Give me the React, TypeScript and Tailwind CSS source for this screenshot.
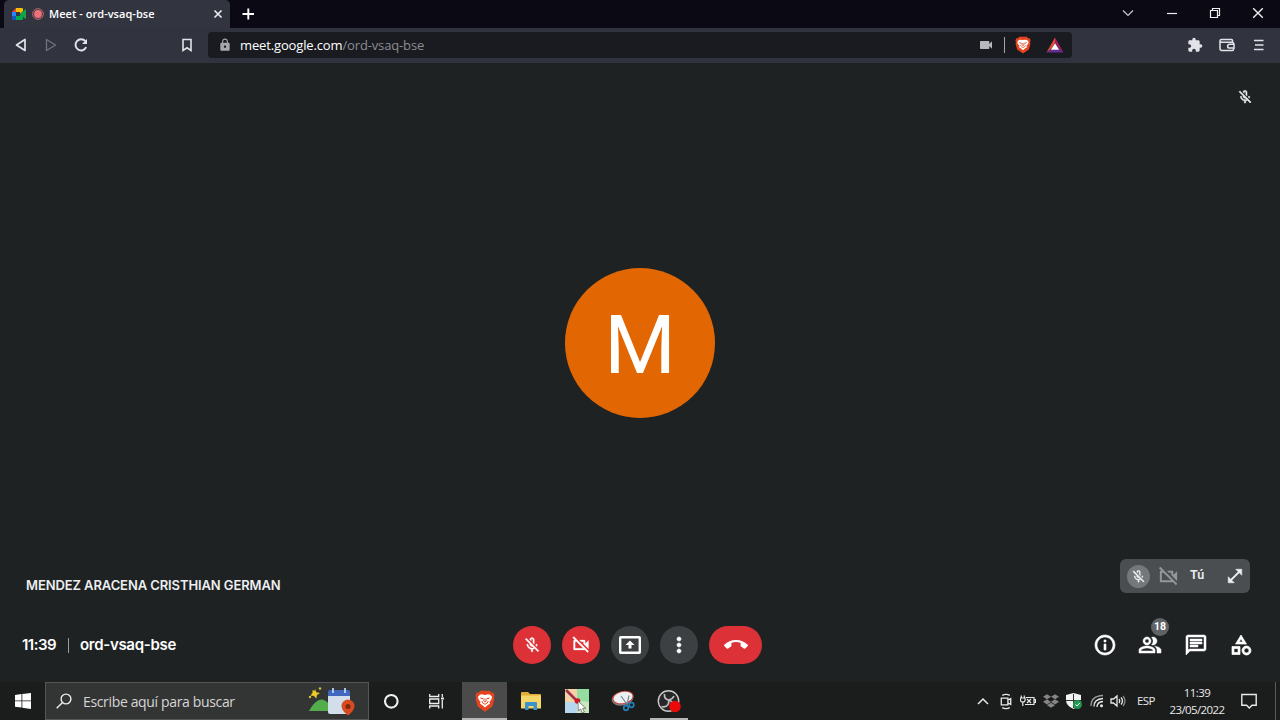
import React from "react";
import {
  MdOutlineMicOff,
  MdOutlineVideocamOff,
  MdMoreVert,
  MdCallEnd,
  MdOutlineInfo,
  MdOutlinePeopleAlt,
  MdOutlineChat,
  MdOutlineCategory,
  MdVideocam,
  MdLock,
  MdExtension,
  MdOpenInFull,
} from "react-icons/md";
import { FaDropbox } from "react-icons/fa";

function BraveIcon({ className }: { className: string }) {
  return (
    <svg viewBox="0 0 20 22" className={className}>
      <path d="M5.500.7h9l2 2 1.800-.2 1.200 3-.7 2 .5 2-2 7L10 21.700 2.700 16.500l-2-7 .5-2-.7-2 1.200-3 1.800.2z" fill="#e8431f" />
      <path d="M4.800 4.800 7 4.300l3 .6 3-.6 2.200.5 1.900 2.300-.8 2.500-1.800 2.400.4 1.700-2.400 1.600L10 17.500l-2.500-2.200-2.400-1.600.4-1.700-1.800-2.400L2.900 7.100z" fill="#fff" />
      <path d="m4.800 7.600 3.400.7.300 1-2.200-.3zM15.200 7.600l-3.400.7-.3 1 2.200-.3z" fill="#e8431f" />
      <path d="m9.200 8.500-.4 2.600L10 12l1.200-.9-.4-2.600M6.800 11l1.100 2.200L10 14.300l2.100-1.100 1.100-2.200" fill="none" stroke="#e8431f" strokeWidth=".9" />
    </svg>
  );
}

function TabStrip() {
  return (
    <div className="flex h-7 shrink-0 bg-[#0b0a14] pl-1 text-white">
      <div className="flex w-[226px] items-center rounded-t-[5px] bg-[#32353f] pl-2 pr-[7px]">
        <svg viewBox="0 0 14 12" className="h-3 w-3.5">
          <path d="M0 4 4 0v4z" fill="#ea4335" />
          <path d="M4 0h6q1 0 1 1v2L8 6V4H4z" fill="#fbbc04" />
          <path d="M0 4h4v4H0z" fill="#2684fc" />
          <path d="M0 8h4v4H1q-1 0-1-1z" fill="#1256c4" />
          <path d="M4 8h4V6l3 2.500V11q0 1-1 1H4z" fill="#00ac47" />
          <path d="m8 6 5-4.500q1-.6 1 .5v8q0 1-1 .4z" fill="#16a349" />
        </svg>
        <svg viewBox="0 0 12 12" className="ml-1.5 size-3">
          <circle cx="6" cy="6" r="5.300" fill="none" stroke="#c4686e" strokeWidth="1" />
          <circle cx="6" cy="6" r="3.900" fill="#ee7379" />
        </svg>
        <span className="-mt-0.5 ml-[5px] whitespace-nowrap text-[11px] font-semibold leading-none tracking-[0.04px]">Meet - ord-vsaq-bse</span>
        <svg viewBox="0 0 10 10" className="ml-auto size-2.5" fill="none" stroke="#e8e8ec" strokeWidth="1.700">
          <path d="m1.500 1.500 7 7m0-7-7 7" />
        </svg>
      </div>
      <svg viewBox="0 0 12 12" className="ml-3 mt-2 size-3" fill="none" stroke="#fff" strokeWidth="1.900">
        <path d="M6.300.5v11M.5 6h11.500" />
      </svg>
      <div className="ml-auto mr-4 mt-[7px] flex h-3 items-center text-[#eeeef2]">
        <svg viewBox="0 0 12 12" className="size-3" fill="none" stroke="#c9c9d0" strokeWidth="1.200">
          <path d="m1 3.500 5 5 5-5" />
        </svg>
        <svg viewBox="0 0 12 12" className="ml-8 size-3" fill="none" stroke="currentColor" strokeWidth="1.200">
          <path d="M1 6.500h10" />
        </svg>
        <svg viewBox="0 0 12 12" className="ml-[31px] size-3" fill="none" stroke="currentColor" strokeWidth="1.200">
          <path d="M1.500 3.500h7v7h-7zM3.500 3.500v-2h7v7h-2" />
        </svg>
        <svg viewBox="0 0 12 12" className="ml-[31px] size-3" fill="none" stroke="currentColor" strokeWidth="1.400">
          <path d="m1.200 1.200 9.600 9.600m0-9.600-9.600 9.600" />
        </svg>
      </div>
    </div>
  );
}

function Toolbar() {
  return (
    <div className="flex h-[35px] shrink-0 items-center bg-[#31343f] pb-px pl-3.5 pr-[14px] text-[#e2e3e8]">
      <svg viewBox="0 0 14 16" className="h-4 w-3.5" fill="none" stroke="currentColor" strokeWidth="1.700" strokeLinejoin="round">
        <path d="M2.500 8 11 2.500v11z" />
      </svg>
      <svg viewBox="0 0 14 16" className="ml-4 h-4 w-3.5" fill="none" stroke="#70737d" strokeWidth="1.300" strokeLinejoin="round">
        <path d="M11.500 8 2.500 2.500v11z" />
      </svg>
      <svg viewBox="0 0 16 16" className="ml-[15px] size-4" fill="none" stroke="currentColor" strokeWidth="1.900">
        <path d="M13.200 10.200A5.600 5.600 0 1 1 12.400 4.200" />
        <path d="M14 2v5H9z" fill="currentColor" stroke="none" />
      </svg>
      <svg viewBox="0 0 12 14" className="ml-[92px] h-3.5 w-3" fill="none" stroke="currentColor" strokeWidth="1.600">
        <path d="M2 1.500h8v11L6 9.800l-4 2.700z" />
      </svg>
      <div className="ml-[15px] flex h-[26px] w-[864px] items-center rounded-[4px] bg-[#191b20] pl-[10px] pr-[8px]">
        <MdLock className="size-3.5 text-[#a7a8ac]" />
        <span className="ml-[8px] whitespace-nowrap text-[13px] leading-none tracking-[-0.14px] text-[#8b8d92]">
          <span className="text-white">meet.google.com</span>/ord-vsaq-bse
        </span>
        <MdVideocam className="ml-auto h-4 w-4 text-[#b8b9bd]" />
        <div className="ml-[10px] h-4 w-px bg-[#a4a5a9]" />
        <BraveIcon className="ml-2.5 h-[18px] w-4" />
        <svg viewBox="0 0 18 16" className="ml-[15px] h-4 w-[18px]">
          <path d="M9 .5 9 6 4.500 12.500.5 15.500z" fill="#e64a35" />
          <path d="m9 .5 8.500 15-4-3L9 6z" fill="#9e1f63" />
          <path d="M.5 15.500h17l-4-3h-9z" fill="#662d91" />
          <path d="m9 6.200 4.200 6.500H4.800z" fill="#fff" />
        </svg>
      </div>
      <MdExtension className="ml-auto size-4" />
      <svg viewBox="0 0 16 14" className="ml-4 h-3.5 w-4" fill="none" stroke="currentColor" strokeWidth="1.500">
        <path d="M13.500 4V2.500q0-1-1-1h-10q-1.500 0-1.500 1.500v7.500q0 2 2 2h10.500q1 0 1-1V10M1 3.500q.5.8 1.500.8h11q1 0 1 1V6" />
        <path d="M15 6.300h-4.500a1.900 1.900 0 0 0 0 3.800H15z" />
      </svg>
      <svg viewBox="0 0 10 12" className="ml-[19px] mr-0.5 h-3 w-2.5" fill="none" stroke="currentColor" strokeWidth="1.600">
        <path d="M0 1.500h9.500M1 6h8.500M0 10.500h9.500" />
      </svg>
    </div>
  );
}

function CallStage() {
  return (
    <div className="flex h-[542px] shrink-0 flex-col">
      <div className="flex h-[205px] justify-end pr-[27px] pt-[26px]">
        <MdOutlineMicOff className="size-4 stroke-current stroke-[0.8] text-[#e8eaed] [&_path[fill=none]]:stroke-none" />
      </div>
      <div className="mx-auto flex size-[150px] shrink-0 items-center justify-center rounded-full bg-[#e26703]">
        <span className="mt-[3px] font-['Roboto',sans-serif] text-[82px] leading-none text-white">M</span>
      </div>
      <div className="mt-[141px] flex items-start justify-between pl-[26px] pr-[30px]">
        <span className="mt-[19px] whitespace-nowrap font-['Inter',sans-serif] text-[13px] font-semibold leading-[14px] tracking-[-0.1px] text-[#eceef0]">MENDEZ ARACENA CRISTHIAN GERMAN</span>
        <div className="flex h-[34px] w-[130px] items-center rounded-md bg-[#4a4e51] pl-[7px] pr-[6px] text-[#eceef0]">
          <div className="flex size-[23px] items-center justify-center rounded-full bg-[#75787a]">
            <MdOutlineMicOff className="size-[15px] stroke-current stroke-[0.6] [&_path[fill=none]]:stroke-none" />
          </div>
          <MdOutlineVideocamOff className="ml-[7px] size-[23px] text-[#95989a]" />
          <span className="mb-0.5 ml-[10px] font-['Roboto',sans-serif] text-[12.500px] font-semibold leading-none">Tú</span>
          <MdOpenInFull className="ml-auto size-[18px] stroke-current stroke-[0.8] [&_path[fill=none]]:stroke-none" />
        </div>
      </div>
    </div>
  );
}

function CallControls() {
  return (
    <div className="flex h-[77px] shrink-0 items-start pl-[22px] pr-[27px] text-white">
      <div className="mt-[32px] flex w-[491px] items-center font-['Inter',sans-serif] text-[15px] font-semibold leading-4">
        <span className="w-[35px] tracking-[-0.5px]">11:39</span>
        <div className="ml-[11px] h-[15px] w-px bg-[#9b9ea0]" />
        <span className="ml-[11px] whitespace-nowrap tracking-[-0.3px]">ord-vsaq-bse</span>
      </div>
      <div className="mt-[21px] flex h-[38px] gap-[11px]">
        <div className="flex size-[38px] items-center justify-center rounded-full bg-[#dc3237]"><MdOutlineMicOff className="size-[18px] stroke-current stroke-[0.5] [&_path[fill=none]]:stroke-none" /></div>
        <div className="flex size-[38px] items-center justify-center rounded-full bg-[#dc3237]"><MdOutlineVideocamOff className="size-[20px] stroke-current stroke-[0.3] [&_path[fill=none]]:stroke-none" /></div>
        <div className="flex size-[38px] items-center justify-center rounded-full bg-[#3c4043]">
          <svg viewBox="0 0 22 18" className="h-[18px] w-[22px]">
            <rect x="1.200" y="1.200" width="19.600" height="15.600" rx=".5" fill="none" stroke="currentColor" strokeWidth="2.400" />
            <path d="m11 4.500 4.500 4.500h-3v3.500h-3V9h-3z" fill="currentColor" />
          </svg>
        </div>
        <div className="flex size-[38px] items-center justify-center rounded-full bg-[#3c4043]"><MdMoreVert className="size-[24px] stroke-current stroke-[0.6] [&_path[fill=none]]:stroke-none" /></div>
        <div className="flex h-[38px] w-[53px] items-center justify-center rounded-full bg-[#dc3237]"><MdCallEnd className="size-[24px]" /></div>
      </div>
      <div className="ml-auto mt-[28px] flex gap-[21.500px]">
        <MdOutlineInfo className="size-6 stroke-current stroke-[0.6] [&_path[fill=none]]:stroke-none" />
        <div className="relative">
          <MdOutlinePeopleAlt className="size-6 stroke-current stroke-[0.5] [&_path[fill=none]]:stroke-none" />
          <span className="absolute -top-[15px] left-[13px] flex size-[18px] items-center justify-center rounded-full bg-[#5f6366] font-['Roboto',sans-serif] text-[10.500px] font-bold leading-none">18</span>
        </div>
        <MdOutlineChat className="size-6 stroke-current stroke-[0.5] [&_path[fill=none]]:stroke-none" />
        <MdOutlineCategory className="size-6 stroke-current stroke-[0.7] [&_path[fill=none]]:stroke-none" />
      </div>
    </div>
  );
}

function Taskbar() {
  return (
    <div className="flex h-[38px] shrink-0 items-center bg-[#1b1c1c] text-[#e8e8e8]">
      <svg viewBox="0 0 16 16" className="ml-[15px] size-4" fill="#fff">
        <path d="m0 2 6.500-.9v6.300H0zM7.300 1 16 0v7.400H7.300zM0 8.200h6.500v6.400L0 13.800zM7.300 8.200H16V16l-8.700-1.200z" />
      </svg>
      <div className="ml-[14px] flex h-[38px] w-[324px] items-center border border-[#565656] bg-[#333434] pl-2.5 pr-[12px]">
        <svg viewBox="0 0 16 16" className="size-4" fill="none" stroke="#eee" strokeWidth="1.400">
          <circle cx="10" cy="6" r="4.900" /><path d="M6.500 9.500.7 15.300" />
        </svg>
        <span className="ml-[11px] mt-px whitespace-nowrap text-[14px] leading-none tracking-[-0.35px] text-[#d6d6d6]">Escribe aquí para buscar</span>
        <svg viewBox="0 0 48 30" className="ml-auto h-[30px] w-12">
          <path d="M1 25q4-8 10-11 5-2 10 4v7z" fill="#54ad4b" />
          <path d="m7 3 1.300 3.200L12 7l-3 2-.7 3.500L6 10 2.500 9.500l2-2.700L4.500 4l2 1z" fill="#e9ca28" />
          <circle cx="12" cy="2.500" r="1.200" fill="#dec12b" /><circle cx="2" cy="11" r="1.200" fill="#dec12b" />
          <path d="M20 8h22v18q0 2-2 2H22q-2 0-2-2z" fill="#d3deeb" />
          <path d="M20 10V6q0-2 2-2h18q2 0 2 2v4z" fill="#4267bf" />
          <path d="M25 2v5M37 2v5" stroke="#b9d3f2" strokeWidth="1.800" />
          <path d="M40 29.500q-6.500-5-6.500-9.500a6.500 6.500 0 0 1 13 0q0 4.500-6.500 9.500z" fill="#d94a20" />
          <circle cx="40" cy="20.500" r="2.500" fill="#7d2710" />
        </svg>
      </div>
      <svg viewBox="0 0 16 16" className="ml-[14px] size-4" fill="none" stroke="#f0f0f0" strokeWidth="2.100">
        <circle cx="8.300" cy="8.300" r="6.300" />
      </svg>
      <svg viewBox="0 0 16 16" className="ml-[30px] size-4" fill="none" stroke="#eee" strokeWidth="1.300">
        <path d="M.7 1v2.500h9V1M.7 6h9v4.500h-9zM.7 15.500V13h9v2.500M13.300 1v3m0 3v8.500" /><path d="M12 4.500h3v2h-3z" fill="#eee" stroke="none" />
      </svg>
      <div className="ml-[17px] flex h-[38px] w-[45px] items-center justify-center border-b-2 border-[#b6b6b6] bg-[#4b4b4b]">
        <BraveIcon className="mt-0.5 h-[22px] w-5" />
      </div>
      <svg viewBox="0 0 22 20" className="ml-[13px] h-5 w-[22px]">
        <path d="M1 2q0-1 1-1h6l2 2h10q1 0 1 1v13H1z" fill="#e0ad37" />
        <path d="M1 4.500h20v13H1z" fill="#f7d669" />
        <path d="M5 19V12q0-1 1-1h10q1 0 1 1v7h-3.500v-4h-5v4z" fill="#3a93ca" />
      </svg>
      <svg viewBox="0 0 24 24" className="ml-[23px] size-6">
        <path d="M0 0h24v24H0z" fill="#e3ead9" />
        <path d="M0 0h12v12L0 15z" fill="#f3d3a3" /><path d="M12 0h12v13L12 12z" fill="#94dca0" />
        <path d="M0 13h12v11H0z" fill="#b5d8ef" /><path d="M14 13h10v11H14z" fill="#c8e8bd" />
        <path d="m1 1 11 11" stroke="#a42e4d" strokeWidth="2.600" />
        <circle cx="12.500" cy="12" r="2.800" fill="#d91520" />
        <path d="m13 12 .3 10 2.300-2 1.800 4 2-1-1.800-3.700h3.200z" fill="#fff" stroke="#555" strokeWidth=".7" />
      </svg>
      <svg viewBox="0 0 24 22" className="ml-[22px] h-[22px] w-6">
        <ellipse cx="11.500" cy="8.500" rx="11" ry="7" fill="#85787a" transform="rotate(-12 11.500 8.500)" />
        <ellipse cx="12" cy="7.500" rx="10.800" ry="6.500" fill="#c9403e" transform="rotate(-12 12 7.500)" />
        <ellipse cx="12" cy="7.500" rx="9.700" ry="5.500" fill="#edf0f3" transform="rotate(-12 12 7.500)" />
        <path d="m10 6 6.500 9m1.500-9.500-2 9" stroke="#75899a" strokeWidth="1.200" />
        <g fill="none" stroke="#2480b8" strokeWidth="1.700"><circle cx="15" cy="18" r="2.300" /><circle cx="20.500" cy="15" r="2.300" /></g>
      </svg>
      <div className="ml-[15px] flex h-[38px] w-[38px] items-center justify-center border-b-2 border-[#b6b6b6]">
        <svg viewBox="0 0 24 24" className="mt-0.5 size-6">
          <circle cx="11.500" cy="12" r="10.200" fill="#272729" stroke="#c9c9c9" strokeWidth="1.400" />
          <g fill="none" stroke="#bdbdbd" strokeWidth="1.700"><path d="M7.500 5q-.5 5 4 6 4-.5 5.500-4M11.500 11q1 4-2 6-2.500 1.500-5 .5M11.500 11q4 1 5 5" /></g>
          <circle cx="18" cy="17.500" r="5.800" fill="#ed0909" />
        </svg>
      </div>
      <div className="ml-auto flex items-center">
        <svg viewBox="0 0 12 12" className="size-3" fill="none" stroke="currentColor" strokeWidth="1.500"><path d="m1 9 5-5 5 5" /></svg>
        <svg viewBox="0 0 14 18" className="ml-[10px] h-[17px] w-3.5" fill="none" stroke="currentColor" strokeWidth="1.400"><path d="M2 5.500h7v7H2zM9 7.500l3-1.500v6L9 10.500M3 2.500q4-2 8 0M3 15.500q4 2 8 0" /></svg>
        <svg viewBox="0 0 16 12" className="ml-[7px] h-3 w-4" fill="none" stroke="currentColor" strokeWidth="1.200"><path d="M6 2.500h8v7H5M14 4.500h1.500v3H14M7 4l4 4m0-4L7 8M1.300.5V3m3-2.500V3M.5 3h4.600v2Q5 7 2.800 7 .5 7 .5 5zM2.800 7v4" /></svg>
        <FaDropbox className="ml-[7px] size-4 text-[#858585]" />
        <svg viewBox="0 0 16 16" className="ml-[7px] size-4">
          <path d="M7.500 0 15 2v5q0 6-7.500 9Q0 13 0 7V2z" fill="#f2f2f2" /><path d="M7.500 1v14M0 7.500h15" stroke="#333" strokeWidth="1" />
          <circle cx="11.500" cy="11.500" r="4.500" fill="#209650" /><path d="m9.500 11.500 1.500 1.500 2.700-3" fill="none" stroke="#fff" />
        </svg>
        <svg viewBox="0 0 14 14" className="ml-[8px] size-3.5" fill="none" stroke="currentColor" strokeWidth="1.300">
          <path d="M1 12Q1 2 13 1.500" stroke="#9a9a9a" /><path d="M4 12.500Q4 5 13 4.500M7 13q0-5 6-5.500" /><circle cx="11.500" cy="11.800" r="1.500" fill="currentColor" stroke="none" />
        </svg>
        <svg viewBox="0 0 16 14" className="ml-[6px] h-3.5 w-4" fill="none" stroke="currentColor" strokeWidth="1.300">
          <path d="M1 5h2.500L7 2v10L3.500 9H1zM9 5q1.500 2 0 4M11 3.500q3 3.500 0 7" /><path d="M13 2q4 5 0 10" stroke="#888" />
        </svg>
        <span className="ml-[11px] text-[11.500px] leading-none tracking-[-0.5px]">ESP</span>
        <div className="ml-[14px] flex w-14 flex-col items-center whitespace-nowrap text-[11.500px] leading-[17px] tracking-[-0.6px]">
          <span>11:39</span><span>23/05/2022</span>
        </div>
        <svg viewBox="0 0 16 16" className="ml-4 size-4" fill="none" stroke="currentColor" strokeWidth="1.400"><path d="M.8 1.500h14.400v10.800H11L8.300 15l-2.700-2.700H.8z" /></svg>
        <div className="ml-[18px] mr-[4px] h-[38px] w-px bg-[#5a5a5a]" />
      </div>
    </div>
  );
}

export default function App() {
  return (
    <div className="flex h-[720px] w-[1280px] flex-col overflow-hidden bg-[#1f2223] font-['Open_Sans','Noto_Sans',sans-serif]">
      <TabStrip />
      <Toolbar />
      <CallStage />
      <CallControls />
      <Taskbar />
    </div>
  );
}
